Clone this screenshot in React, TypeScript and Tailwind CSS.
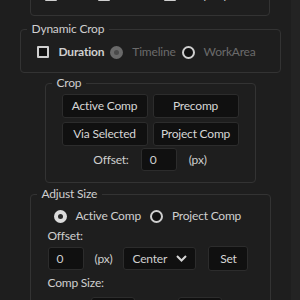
import React from "react";

const font = { fontFamily: "Lato, 'Noto Sans', sans-serif" };

function Legend({ children }: { children: React.ReactNode }) {
  return (
    <legend className="ml-[6px] px-[5px] text-[12px] leading-[14px] text-[#cfcfcf]">
      {children}
    </legend>
  );
}

function Checkbox() {
  return <span className="inline-block shrink-0 w-[12px] h-[12px] border-2 border-[#cfcfcf] bg-[#111] rounded-[1px]" />;
}

function Radio({ checked, disabled }: { checked?: boolean; disabled?: boolean }) {
  if (checked) {
    return (
      <span
        className={`inline-flex shrink-0 items-center justify-center w-[13px] h-[13px] rounded-full ${
          disabled ? "bg-[#6a6a6a]" : "bg-[#dcdcdc]"
        }`}
      >
        <span className={`w-[5px] h-[5px] rounded-full ${disabled ? "bg-[#4a4a4a]" : "bg-[#2a2a2a]"}`} />
      </span>
    );
  }
  return <span className="inline-block shrink-0 w-[13px] h-[13px] rounded-full border-2 border-[#cfcfcf] bg-[#111]" />;
}

function Btn({ children, className = "" }: { children: React.ReactNode; className?: string }) {
  return (
    <div
      className={`flex items-center justify-center bg-[#101010] border border-[#2c2c2c] rounded-[3px] text-[12px] text-[#d6d6d6] ${className}`}
    >
      {children}
    </div>
  );
}

function Input({ value, className = "" }: { value: string; className?: string }) {
  return (
    <div
      className={`flex items-center pl-[8px] bg-[#101010] border border-[#2c2c2c] rounded-[3px] text-[12px] text-[#cfcfcf] ${className}`}
    >
      {value}
    </div>
  );
}

export default function App() {
  return (
    <div className="w-[300px] h-[300px] overflow-hidden bg-[#1e1e1e] relative tracking-[-0.2px]" style={font}>
      <div className="absolute right-0 top-0 w-[9px] h-[300px] bg-[#232323]" />
      <div className="flex flex-col items-center -mt-[19px]">
        {/* top fieldset (cut off) */}
        <fieldset className="w-[240px] border border-[#333] rounded-[4px] pt-[6px] pb-[13px]">
          <div className="flex items-center h-[14px] text-[12px] text-[#cfcfcf] pl-[14px]">
            <Checkbox />
            <span className="ml-[8px] w-[33px]">Fit</span>
            <Checkbox />
            <span className="ml-[8px] w-[46px]">Trim</span>
            <Checkbox />
            <span className="ml-[8px]">Only Layers</span>
          </div>
        </fieldset>

        {/* Dynamic Crop */}
        <fieldset className="mt-[6px] w-[261px] border border-[#333] rounded-[4px]">
          <Legend>Dynamic Crop</Legend>
          <div className="flex items-center h-[20px] pl-[16px] mt-[6px] mb-[10px] text-[12px]">
            <Checkbox />
            <span className="ml-[10px] font-bold text-[#cfcfcf]">Duration</span>
            <span className="ml-[6px] flex">
              <Radio checked disabled />
            </span>
            <span className="ml-[9px] text-[#6b6b6b]">Timeline</span>
            <span className="ml-[6px] flex">
              <Radio />
            </span>
            <span className="ml-[9px] text-[#6b6b6b]">WorkArea</span>
          </div>
        </fieldset>

        {/* Crop */}
        <fieldset className="mt-[3px] w-[211px] border border-[#333] rounded-[4px]">
          <Legend>Crop</Legend>
          <div className="mt-[4px] grid grid-cols-[86px_86px] gap-x-[5px] gap-y-[4px] justify-center">
            <Btn className="h-[24px]">Active Comp</Btn>
            <Btn className="h-[24px]">Precomp</Btn>
            <Btn className="h-[24px]">Via Selected</Btn>
            <Btn className="h-[24px]">Project Comp</Btn>
          </div>
          <div className="flex items-center justify-center mt-[2px] mb-[11px] text-[12px] text-[#cfcfcf]">
            <span>Offset:</span>
            <Input value="0" className="ml-[12px] w-[36px] h-[23px]" />
            <span className="ml-[12px]">(px)</span>
          </div>
        </fieldset>

        {/* Adjust Size */}
        <fieldset className="mt-[4px] w-[241px] border border-[#333] rounded-[4px]">
          <Legend>Adjust Size</Legend>
          <div className="pl-[17px] pt-[5px] pb-[12px]">
            <div className="flex items-center h-[20px] pl-[6px] text-[12px] text-[#cfcfcf]">
              <Radio checked />
              <span className="ml-[9px]">Active Comp</span>
              <span className="ml-[9px] flex">
                <Radio />
              </span>
              <span className="ml-[9px]">Project Comp</span>
            </div>
            <div className="mt-[1px] text-[12px] leading-[18px] text-[#cfcfcf]">Offset:</div>
            <div className="flex items-center mt-[1px] text-[12px] text-[#cfcfcf]">
              <Input value="0" className="w-[36px] h-[23px]" />
              <span className="ml-[11px]">(px)</span>
              <div className="ml-[11px] w-[73px] h-[23px] flex items-center justify-between px-[8px] bg-[#101010] border border-[#2c2c2c] rounded-[3px]">
                <span>Center</span>
                <svg width="11" height="7" viewBox="0 0 11 7">
                  <path d="M1 1 L5.5 5.5 L10 1" stroke="#d6d6d6" strokeWidth="2" fill="none" />
                </svg>
              </div>
              <Btn className="ml-[12px] w-[40px] h-[25px]">Set</Btn>
            </div>
            <div className="mt-[3px] text-[12px] leading-[18px] text-[#cfcfcf]">Comp Size:</div>
            <div className="flex items-center mt-[3px] text-[12px] text-[#cfcfcf]">
              <span className="w-[43px] pt-[8px]">W:</span>
              <Input value="1920" className="w-[44px] h-[23px]" />
              <span className="w-[43px] pt-[8px] text-center">H:</span>
              <Input value="1080" className="w-[44px] h-[23px]" />
              <span className="ml-[10px] pt-[4px]">(px)</span>
            </div>
          </div>
        </fieldset>
      </div>
    </div>
  );
}
